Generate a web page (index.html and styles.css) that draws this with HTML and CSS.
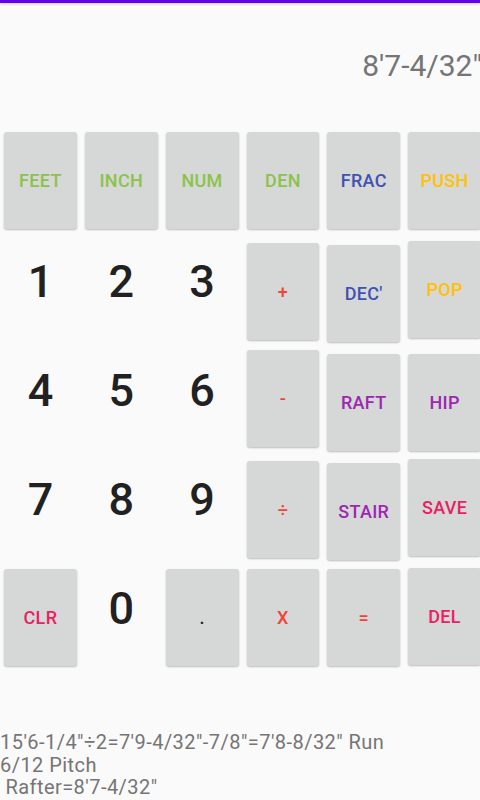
FILE: index.html
```html
<!DOCTYPE html>
<html lang="en">
<head>
    <meta charset="UTF-8">
    <meta name="viewport" content="width=device-width, initial-scale=1.0">
    <title>Construction Calculator</title>
    <link rel="stylesheet" href="styles.css">
</head>
<body>
    <div class="app-bar"></div>

    <div class="screen">
        <div class="display">
            <span class="display-value">8'7-4/32"</span>
        </div>

        <div class="keypad">
            <button class="key green">FEET</button>
            <button class="key green">INCH</button>
            <button class="key green">NUM</button>
            <button class="key green">DEN</button>
            <button class="key blue">FRAC</button>
            <button class="key amber">PUSH</button>

            <div class="digit">1</div>
            <div class="digit">2</div>
            <div class="digit">3</div>
            <button class="key red down-2">+</button>
            <button class="key blue down-4">DEC'</button>
            <button class="key amber">POP</button>

            <div class="digit">4</div>
            <div class="digit">5</div>
            <div class="digit">6</div>
            <button class="key red">-</button>
            <button class="key purple down-4">RAFT</button>
            <button class="key purple down-4">HIP</button>

            <div class="digit">7</div>
            <div class="digit">8</div>
            <div class="digit">9</div>
            <button class="key red down-2">÷</button>
            <button class="key purple down-4">STAIR</button>
            <button class="key pink">SAVE</button>

            <button class="key pink down-1">CLR</button>
            <div class="digit">0</div>
            <button class="key dark down-1">.</button>
            <button class="key red down-1">X</button>
            <button class="key red down-1">=</button>
            <button class="key pink">DEL</button>
        </div>

        <div class="history">15'6-1/4"÷2=7'9-4/32"-7/8"=7'8-8/32" Run
6/12 Pitch
 Rafter=8'7-4/32"</div>
    </div>
</body>
</html>
```

FILE: styles.css
```css
body {
    margin: 0;
    width: 480px;
    height: 800px;
    overflow: hidden;
    background-color: #fafafa;
    font-family: Roboto, "Noto Sans", sans-serif;
}

.app-bar {
    height: 3px;
    background-color: #6200ee;
    box-shadow: 0 1px 3px rgba(0, 0, 0, 0.2);
}

/* the layout is a little wider than the window, the right edge gets clipped */
.screen {
    width: 485px;
}

.display {
    height: 123px;
    box-sizing: border-box;
    padding-top: 45px;
    padding-right: 3px;
    text-align: right;
    white-space: nowrap;
}

.display-value {
    font-size: 30px;
    color: #757575;
}

.keypad {
    display: grid;
    grid-template-columns: repeat(6, 1fr);
    grid-auto-rows: 109px;
}

.key {
    margin: 6px 4px;
    padding: 0;
    border: none;
    border-radius: 3px;
    background-color: #d6d7d7;
    box-shadow: 0 1px 2px rgba(0, 0, 0, 0.25);
    font-family: Roboto, "Noto Sans", sans-serif;
    font-size: 18px;
    font-weight: 500;
    letter-spacing: 0.3px;
    cursor: pointer;
}

.down-1 { margin-top: 7px; margin-bottom: 5px; }
.down-2 { margin-top: 8px; margin-bottom: 4px; }
.down-4 { margin-top: 10px; margin-bottom: 2px; }

.green { color: #8bc34a; }
.blue { color: #3f51b5; }
.amber { color: #ffc107; }
.purple { color: #9c27b0; }
.pink { color: #e91e63; }
.red { color: #f44336; }
.dark { color: #212121; }

.digit {
    display: flex;
    align-items: center;
    justify-content: center;
    padding-bottom: 16px;
    font-size: 45px;
    font-weight: 500;
    color: #212121;
}

.history {
    margin-top: 60px;
    white-space: pre;
    font-size: 20px;
    line-height: 22.5px;
    letter-spacing: 0.45px;
    color: #757575;
}
```
